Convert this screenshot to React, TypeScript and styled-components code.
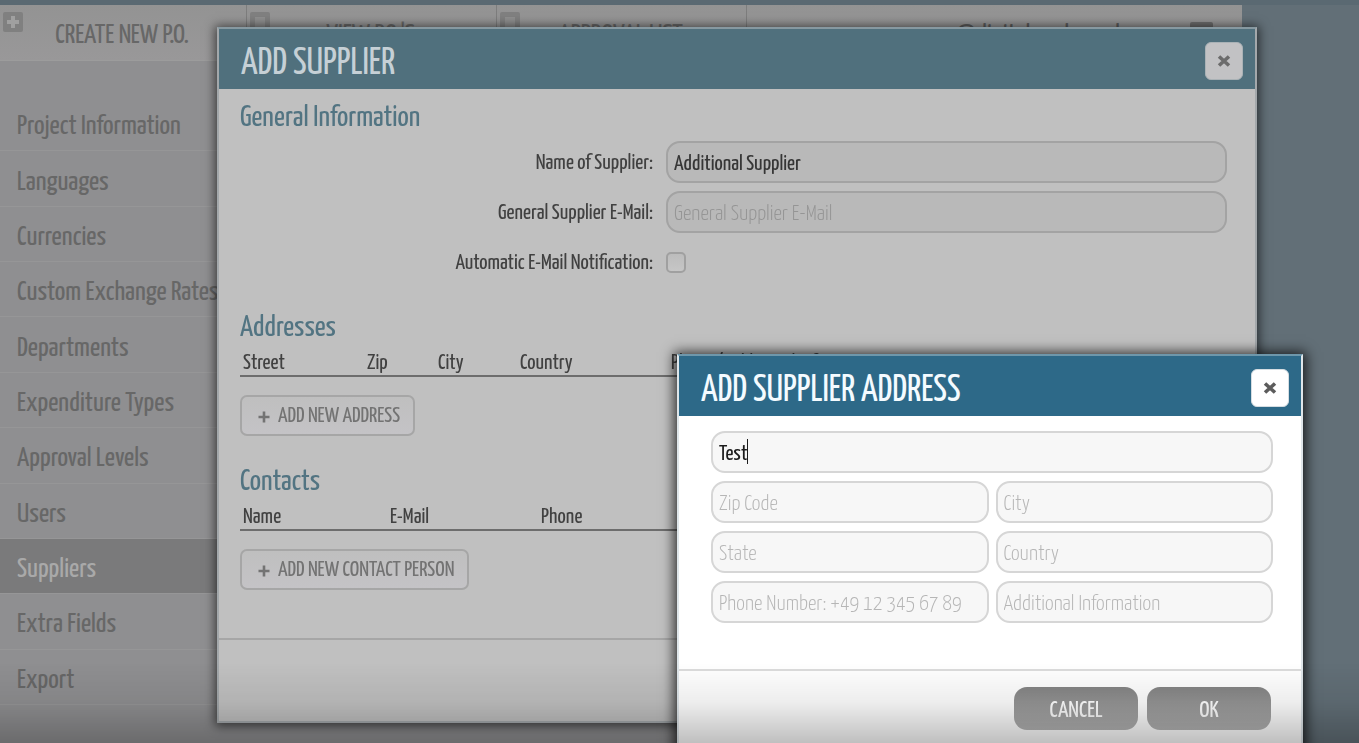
import React, { useState } from "react";
import styled, { createGlobalStyle, css } from "styled-components";

const Global = createGlobalStyle`
  * { box-sizing: border-box; }
  body {
    margin: 0;
    min-height: 100vh;
    overflow: hidden;
    background: #626f77;
    font-family: "Yanone Kaffeesatz", "Roboto Condensed", "Liberation Sans", sans-serif;
    color: #3c3c3c;
  }
  button, input { font-family: inherit; }
`;

const Page = styled.div`
  min-height: 100vh;
  border-top: 5px solid #5a6972;
  padding-right: 117px;
`;

const Surface = styled.div`
  min-height: calc(100vh - 5px);
  background: #8f8f91;
`;

const TopBar = styled.nav`
  display: flex;
  height: 56px;
  background: linear-gradient(#939393, #999899);
  border-bottom: 1px solid #9c9c9c;
`;

const Tab = styled.a`
  display: flex;
  flex: 0 0 250px;
  align-items: flex-start;
  padding: 7px 3px;
  border-right: 1px solid #7d7d7d;
  color: #676767;
  text-decoration: none;
  &:first-child { flex-basis: 247px; }
`;

const TabLabel = styled.span`
  flex: 1;
  padding-right: 22px;
  font-size: 28px;
  line-height: 48px;
  text-align: center;
`;

const Account = styled.div`
  display: flex;
  flex: 1;
  justify-content: flex-end;
  gap: 60px;
  padding: 7px 29px;
  color: #5c5c5c;
  font-size: 28px;
  line-height: 48px;
`;

const Flag = styled.span`
  width: 23px;
  height: 16px;
  margin-top: 10px;
  border-radius: 2px;
  background: #6d6d6d;
`;

const SideNav = styled.nav`
  display: grid;
  grid-auto-rows: 1fr;
  width: 247px;
  min-height: 644px;
  padding-top: 35px;
`;

const SideLink = styled.a<{ $active?: boolean }>`
  display: flex;
  align-items: center;
  padding: 7px 17px 0;
  border-bottom: 1px solid #969697;
  background: ${(p) => (p.$active ? "#7a7a7b" : "transparent")};
  color: ${(p) => (p.$active ? "#a9a9a9" : "#676767")};
  font-size: 28px;
  text-decoration: none;
  white-space: nowrap;
`;

const Layer = styled.div`
  position: fixed;
  inset: 0;
`;

const Dialog = styled.section<{ $dimmed?: boolean }>`
  display: flex;
  flex-direction: column;
  border: 2px solid ${(p) => (p.$dimmed ? "#a3a8ab" : "#dfe6ea")};
  border-top-color: ${(p) => (p.$dimmed ? "#8799a1" : "#6e97ab")};
  background: ${(p) => (p.$dimmed ? "#c0c0c0" : "#ffffff")};
  ${(p) =>
    p.$dimmed
      ? css`
          margin: 27px 102px 0 217px;
          min-height: 696px;
          box-shadow: 0 1px 10px 2px rgba(0, 0, 0, 0.6);
        `
      : css`
          width: 626px;
          margin: 354px 56px 0 auto;
          min-height: 420px;
          box-shadow: 0 1px 12px 3px rgba(0, 0, 0, 0.75);
        `}
`;

const TitleBar = styled.header<{ $dimmed?: boolean }>`
  display: flex;
  align-items: center;
  justify-content: space-between;
  height: 60px;
  padding: 4px 12px 0 22px;
  background-color: ${(p) => (p.$dimmed ? "#50707d" : "#2d6988")};
  color: ${(p) => (p.$dimmed ? "#c6d0d6" : "#f4fbff")};
`;

const Title = styled.h2`
  margin: 0;
  padding-top: 5px;
  font-size: 38px;
  line-height: 40px;
  font-weight: 400;
`;

const CloseButton = styled.button<{ $dimmed?: boolean }>`
  display: grid;
  place-items: center;
  width: 38px;
  height: 38px;
  padding: 0;
  border: 1px solid ${(p) => (p.$dimmed ? "#aab2b6" : "#d5dde2")};
  border-radius: 6px;
  background: ${(p) => (p.$dimmed ? "#c2c2c4" : "#ffffff")};
  color: ${(p) => (p.$dimmed ? "#6c6c6c" : "#5c5c5c")};
`;

const Body = styled.div`
  padding: 8px 28px 0 21px;
`;

const SectionTitle = styled.h3`
  margin: 0;
  padding-top: 3px;
  color: #527482;
  font-size: 30px;
  line-height: 37px;
  font-weight: 400;
`;

const FieldRow = styled.div`
  display: grid;
  grid-template-columns: 413px 1fr;
  align-items: center;
  column-gap: 13px;
  height: 50px;
`;

const FieldLabel = styled.label`
  padding-top: 3px;
  color: #414141;
  font-size: 22px;
  text-align: right;
`;

const TextField = styled.input<{ $dimmed?: boolean }>`
  width: 100%;
  min-width: 0;
  height: 42px;
  padding: 4px 6px 0;
  border: 2px solid ${(p) => (p.$dimmed ? "#a3a3a3" : "#d6d6d6")};
  border-radius: 14px;
  outline: none;
  background: ${(p) => (p.$dimmed ? "#b9b9b9" : "#f7f7f7")};
  color: ${(p) => (p.$dimmed ? "#363636" : "#1c1c1c")};
  caret-color: transparent;
  font-size: 22px;
  &::placeholder {
    color: ${(p) => (p.$dimmed ? "#959595" : "#b6b6b6")};
    font-weight: 300;
    opacity: 1;
  }
`;

const Tick = styled.input`
  appearance: none;
  width: 20px;
  height: 21px;
  margin: 0;
  border: 2px solid #a0a0a0;
  border-radius: 5px;
  background: linear-gradient(#bcbcbc, #c6c6c6);
`;

const Table = styled.table`
  width: 100%;
  border-collapse: collapse;
  border-bottom: 2px solid #6d6d6d;
  table-layout: fixed;
  th {
    height: 29px;
    padding: 4px 3px 0;
    color: #414141;
    font-size: 22px;
    line-height: 24px;
    font-weight: 400;
    text-align: left;
    white-space: nowrap;
  }
`;

const AddButton = styled.button`
  display: inline-flex;
  align-items: center;
  gap: 8px;
  height: 41px;
  margin: 18px 0 25px;
  padding: 2px 13px 0 16px;
  border: 2px solid #a6a6a6;
  border-radius: 7px;
  background: linear-gradient(#bfbfbf, #c4c3c6);
  color: #737373;
  font-size: 22px;
`;

const Gap = styled.div`
  height: 20px;
`;

const AddressForm = styled.form`
  display: grid;
  grid-template-columns: 1fr 1fr;
  gap: 8px 7px;
  padding: 15px 28px 46px 32px;
`;

const Wide = styled.div`
  position: relative;
  grid-column: 1 / -1;
`;

const Caret = styled.span`
  position: absolute;
  top: 8px;
  left: 36px;
  width: 1px;
  height: 25px;
  background: #1c1c1c;
`;

const Footer = styled.footer<{ $dimmed?: boolean }>`
  display: flex;
  flex: ${(p) => (p.$dimmed ? "0 0 83px" : "1")};
  margin-top: ${(p) => (p.$dimmed ? "auto" : "0")};
  align-items: flex-start;
  justify-content: flex-end;
  gap: 9px;
  padding: 16px 30px;
  border-top: 2px solid ${(p) => (p.$dimmed ? "#a6a6a6" : "#dcdcdc")};
`;

const ActionButton = styled.button`
  width: 124px;
  height: 43px;
  padding: 4px 0 0;
  border: 0;
  border-radius: 13px;
  background: linear-gradient(#848484, #b4b4b4);
  color: #ffffff;
  font-size: 24px;
`;

const BottomShade = styled.div`
  position: fixed;
  inset: auto 0 0;
  height: 80px;
  background: linear-gradient(transparent, rgba(0, 0, 0, 0.07) 50%, rgba(0, 0, 0, 0.25));
  pointer-events: none;
`;

const Cross = () => (
  <svg width="14" height="14" viewBox="0 0 14 14" aria-hidden="true">
    <path d="M2 2.5 12 11.5M12 2.5 2 11.5" stroke="currentColor" strokeWidth="3.6" />
  </svg>
);

const Plus = () => (
  <svg width="12" height="12" viewBox="0 0 12 12" aria-hidden="true">
    <path d="M6 0.5V11.5M0.5 6H11.5" stroke="currentColor" strokeWidth="2.6" />
  </svg>
);

const TabIcon = ({ kind }: { kind: "plus" | "sheet" }) => (
  <svg width="20" height="20" viewBox="0 0 20 20" aria-hidden="true">
    <rect width="20" height="20" rx="2" fill="#808080" />
    {kind === "plus" ? (
      <path d="M10 4V16M4 10H16" stroke="#a0a0a0" strokeWidth="4" />
    ) : (
      <rect x="5" y="5" width="10" height="11" fill="#8f8f8f" />
    )}
  </svg>
);

const sections = [
  "Project Information",
  "Languages",
  "Currencies",
  "Custom Exchange Rates",
  "Departments",
  "Expenditure Types",
  "Approval Levels",
  "Users",
  "Suppliers",
  "Extra Fields",
  "Export",
];

const addressColumns: [string, number | undefined][] = [
  ["Street", 124],
  ["Zip", 71],
  ["City", 82],
  ["Country", 151],
  ["Phone / Additional Information", undefined],
];

const contactColumns: [string, number | undefined][] = [
  ["Name", 147],
  ["E-Mail", 151],
  ["Phone", undefined],
];

const addressFields = [
  "Zip Code",
  "City",
  "State",
  "Country",
  "Phone Number: +49 12 345 67 89",
  "Additional Information",
];

const HeadTable = ({ columns }: { columns: [string, number | undefined][] }) => (
  <Table>
    <colgroup>
      {columns.map(([name, width]) => (
        <col key={name} width={width} />
      ))}
    </colgroup>
    <thead>
      <tr>
        {columns.map(([name]) => (
          <th key={name} scope="col">{name}</th>
        ))}
      </tr>
    </thead>
  </Table>
);

export default function App() {
  const [name, setName] = useState("Additional Supplier");
  const [street, setStreet] = useState("Test");

  return (
    <>
      <Global />
      <Page>
        <Surface>
          <TopBar>
            <Tab href="#create"><TabIcon kind="plus" /><TabLabel>CREATE NEW P.O.</TabLabel></Tab>
            <Tab href="#view"><TabIcon kind="sheet" /><TabLabel>VIEW P.O.'S</TabLabel></Tab>
            <Tab href="#approval"><TabIcon kind="sheet" /><TabLabel>APPROVAL LIST</TabLabel></Tab>
            <Account>v@digitalproducer.de<Flag /></Account>
          </TopBar>
          <SideNav>
            {sections.map((s) => (
              <SideLink key={s} href="#section" $active={s === "Suppliers"}>{s}</SideLink>
            ))}
          </SideNav>
        </Surface>
      </Page>

      <Layer>
        <Dialog $dimmed role="dialog" aria-label="Add supplier">
          <TitleBar $dimmed>
            <Title>ADD SUPPLIER</Title>
            <CloseButton $dimmed type="button" aria-label="Close"><Cross /></CloseButton>
          </TitleBar>
          <Body>
            <SectionTitle>General Information</SectionTitle>
            <FieldRow>
              <FieldLabel htmlFor="name">Name of Supplier:</FieldLabel>
              <TextField $dimmed id="name" value={name} onChange={(e) => setName(e.target.value)} />
            </FieldRow>
            <FieldRow>
              <FieldLabel htmlFor="mail">General Supplier E-Mail:</FieldLabel>
              <TextField $dimmed id="mail" type="email" placeholder="General Supplier E-Mail" />
            </FieldRow>
            <FieldRow>
              <FieldLabel htmlFor="notify">Automatic E-Mail Notification:</FieldLabel>
              <Tick id="notify" type="checkbox" />
            </FieldRow>
            <Gap />
            <SectionTitle>Addresses</SectionTitle>
            <HeadTable columns={addressColumns} />
            <AddButton type="button"><Plus />ADD NEW ADDRESS</AddButton>
            <SectionTitle>Contacts</SectionTitle>
            <HeadTable columns={contactColumns} />
            <AddButton type="button"><Plus />ADD NEW CONTACT PERSON</AddButton>
          </Body>
          <Footer $dimmed />
        </Dialog>
      </Layer>

      <Layer>
        <Dialog role="dialog" aria-label="Add supplier address">
          <TitleBar>
            <Title>ADD SUPPLIER ADDRESS</Title>
            <CloseButton type="button" aria-label="Close"><Cross /></CloseButton>
          </TitleBar>
          <AddressForm id="address">
            <Wide>
              <TextField aria-label="Street" autoFocus value={street} onChange={(e) => setStreet(e.target.value)} />
              <Caret />
            </Wide>
            {addressFields.map((f) => (
              <TextField key={f} aria-label={f} placeholder={f} />
            ))}
          </AddressForm>
          <Footer>
            <ActionButton type="button">CANCEL</ActionButton>
            <ActionButton type="submit" form="address">OK</ActionButton>
          </Footer>
        </Dialog>
      </Layer>
      <BottomShade />
    </>
  );
}
